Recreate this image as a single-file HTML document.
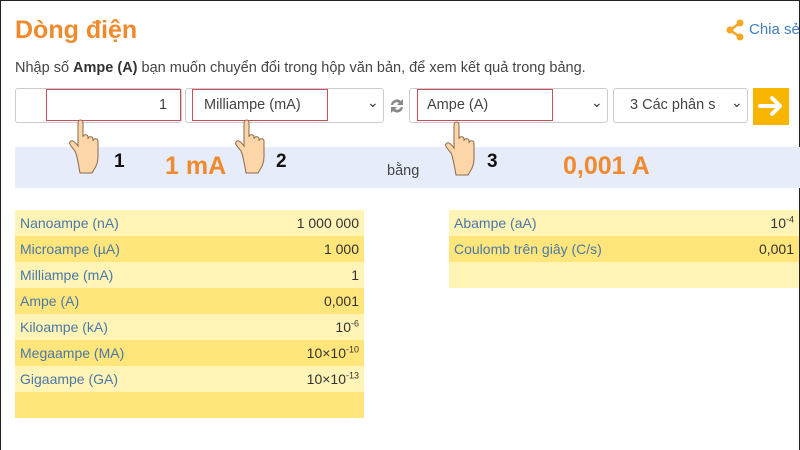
<!DOCTYPE html>
<html><head><meta charset="utf-8"><style>
*{margin:0;padding:0;box-sizing:border-box}
body{width:800px;height:450px;background:#fff;font-family:"Liberation Sans",Arial,sans-serif;position:relative;overflow:hidden;border:1.5px solid #222;border-bottom:none}
.a{position:absolute;white-space:nowrap}
.box{position:absolute;border:1px solid #ccc;border-radius:3px;background:#fff;height:35px;top:87px}
.red{position:absolute;border:1px solid #c9505a;top:88px;height:32px}
.t{font-size:14.5px;color:#444}
.chev{position:absolute;top:93px;font-size:14px;color:#333}
.row{position:absolute;height:26px;font-size:14px;line-height:26px;padding:0 5px;color:#4a78a8;white-space:nowrap}
.row span{position:absolute;right:5px;color:#333}
.l{background:#fff3b5}.d{background:#ffe57a}
sup{font-size:9px;line-height:0}
.num{position:absolute;font-size:19px;font-weight:bold;color:#111}
</style></head><body>
<div class="a" style="left:14px;top:15px;font-size:25px;font-weight:bold;color:#f08a2c">Dòng điện</div>
<svg class="a" style="left:724px;top:18px" width="20" height="22" viewBox="0 0 20 22"><g fill="#f5a623" stroke="#f5a623" stroke-width="2.5"><line x1="15" y1="4" x2="5" y2="11"/><line x1="5" y1="11" x2="15" y2="18"/></g><circle cx="15" cy="4" r="3.5" fill="#f5a623"/><circle cx="5" cy="11" r="3.5" fill="#f5a623"/><circle cx="15" cy="18" r="3.5" fill="#f5a623"/></svg>
<div class="a" style="left:748px;top:20px;font-size:15px;color:#3d7fc5">Chia sẻ</div>
<div class="a t" style="left:14px;top:59px">Nhập số <b style="color:#333">Ampe (A)</b> bạn muốn chuyển đổi trong hộp văn bản, để xem kết quả trong bảng.</div>
<div class="box" style="left:14px;width:167px"></div>
<div class="red" style="left:45px;width:135px"></div>
<div class="a t" style="left:158px;top:96px">1</div>
<div class="box" style="left:184px;width:199px"></div>
<div class="red" style="left:191px;width:136px"></div>
<div class="a t" style="left:203px;top:96px">Milliampe (mA)</div>
<div class="chev" style="left:366px">⌄</div>
<svg class="a" style="left:387px;top:95px" width="18" height="20" viewBox="0 0 18 20"><path d="M3 9a6 6 0 0 1 10-4l2-2v6h-6l2-2a4 4 0 0 0-6 2z M15 11a6 6 0 0 1-10 4l-2 2v-6h6l-2 2a4 4 0 0 0 6-2z" fill="#8a8a8a"/></svg>
<div class="box" style="left:408px;width:199px"></div>
<div class="red" style="left:416px;width:136px"></div>
<div class="a t" style="left:426px;top:96px">Ampe (A)</div>
<div class="chev" style="left:590px">⌄</div>
<div class="box" style="left:612px;width:135px"></div>
<div class="a t" style="left:629px;top:96px">3 Các phân s</div>
<div class="chev" style="left:730px">⌄</div>
<div class="a" style="left:752px;top:87px;width:36px;height:37px;background:#f7b500"></div>
<svg class="a" style="left:756px;top:92px" width="28" height="26" viewBox="0 0 28 26"><path d="M3 13h20M15 5l8 8-8 8" stroke="#fff" stroke-width="4" fill="none" stroke-linecap="round" stroke-linejoin="round"/></svg>
<div class="a" style="left:14px;top:146px;width:786px;height:41px;background:#e6ecf9"></div>
<div class="a" style="left:164px;top:151px;font-size:25px;font-weight:bold;color:#f08a2c">1 mA</div>
<div class="a t" style="left:386px;top:162px">bằng</div>
<div class="a" style="left:562px;top:151px;font-size:25px;font-weight:bold;color:#f08a2c">0,001 A</div>
<svg width="0" height="0" style="position:absolute"><defs><g id="h"><path d="M10 32 C5 26 3 24 6 22 C8 21 11 24 13 27 L13 4 C13 0 18 0 18 4 L18 18 C18 15 23 15 23 18 L23 20 C23 17 28 17 28 20 L28 22 C28 19 33 19 33 22 L33 38 C33 46 29 50 27 54 L15 54 C14 48 12 36 10 32 Z" fill="#fcd6a8" stroke="#8a6a4a" stroke-width="1"/></g></defs></svg>
<svg class="a" style="left:64px;top:118px" width="40" height="56"><use href="#h"/></svg>
<svg class="a" style="left:230px;top:118px" width="40" height="56"><use href="#h"/></svg>
<svg class="a" style="left:440px;top:120px" width="40" height="56"><use href="#h"/></svg>
<div class="num" style="left:113px;top:150px">1</div>
<div class="num" style="left:275px;top:150px">2</div>
<div class="num" style="left:486px;top:150px">3</div>
<div class="row l" style="left:14px;top:209px;width:349px">Nanoampe (nA)<span>1 000 000</span></div>
<div class="row d" style="left:14px;top:235px;width:349px">Microampe (µA)<span>1 000</span></div>
<div class="row l" style="left:14px;top:261px;width:349px">Milliampe (mA)<span>1</span></div>
<div class="row d" style="left:14px;top:287px;width:349px">Ampe (A)<span>0,001</span></div>
<div class="row l" style="left:14px;top:313px;width:349px">Kiloampe (kA)<span>10<sup>-6</sup></span></div>
<div class="row d" style="left:14px;top:339px;width:349px">Megaampe (MA)<span>10×10<sup>-10</sup></span></div>
<div class="row l" style="left:14px;top:365px;width:349px">Gigaampe (GA)<span>10×10<sup>-13</sup></span></div>
<div class="row d" style="left:14px;top:391px;width:349px"></div>
<div class="row l" style="left:448px;top:209px;width:350px">Abampe (aA)<span>10<sup>-4</sup></span></div>
<div class="row d" style="left:448px;top:235px;width:350px">Coulomb trên giây (C/s)<span>0,001</span></div>
<div class="row l" style="left:448px;top:261px;width:350px"></div>
</body></html>
